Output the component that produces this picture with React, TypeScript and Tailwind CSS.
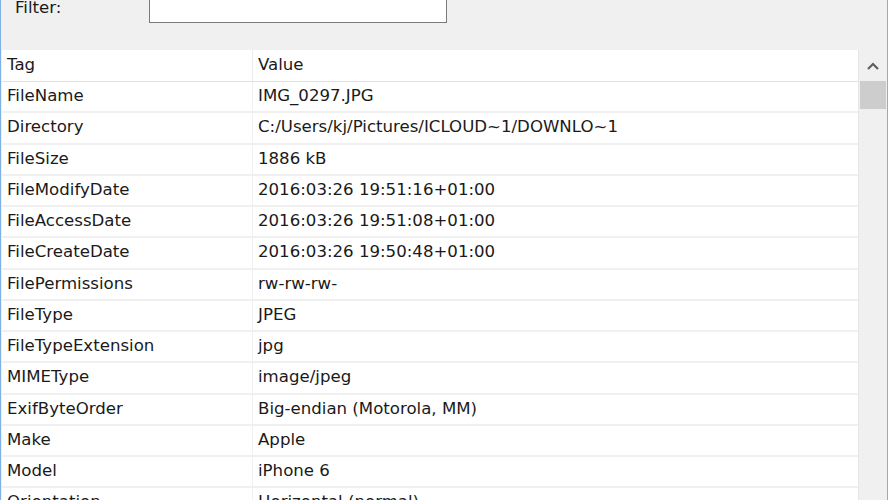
const rows: [string, string][] = [
  ['FileName', 'IMG_0297.JPG'],
  ['Directory', 'C:/Users/kj/Pictures/ICLOUD~1/DOWNLO~1'],
  ['FileSize', '1886 kB'],
  ['FileModifyDate', '2016:03:26 19:51:16+01:00'],
  ['FileAccessDate', '2016:03:26 19:51:08+01:00'],
  ['FileCreateDate', '2016:03:26 19:50:48+01:00'],
  ['FilePermissions', 'rw-rw-rw-'],
  ['FileType', 'JPEG'],
  ['FileTypeExtension', 'jpg'],
  ['MIMEType', 'image/jpeg'],
  ['ExifByteOrder', 'Big-endian (Motorola, MM)'],
  ['Make', 'Apple'],
  ['Model', 'iPhone 6'],
  ['Orientation', 'Horizontal (normal)'],
]

export default function App() {
  return (
    <div
      className="w-[888px] h-[500px] overflow-hidden bg-[#f0f0f0] border-l border-r border-[#7fb1e3] text-[16.6px] text-[#1a1a1a]"
      style={{ fontFamily: '"DejaVu Sans", sans-serif' }}
    >
      {/* filter bar */}
      <div className="flex items-start h-[56px] -mt-[6px]">
        <span className="ml-[14px] w-[134px] shrink-0 mt-[2px] leading-[24px]">Filter:</span>
        <div className="w-[298px] h-[29px] bg-white border border-[#7a7a7a]" />
      </div>

      <div className="flex h-[450px]">
        {/* table */}
        <div className="ml-[1px] w-[856px] bg-white">
          <div className="flex h-[32px] border-b border-[#e2e2e2]">
            <div className="w-[251px] pl-[5px] flex items-center border-r border-[#ececec]">Tag</div>
            <div className="pl-[5px] flex items-center">Value</div>
          </div>
          {rows.map(([tag, value]) => (
            <div key={tag} className="flex h-[31.25px] border-b-2 border-[#f0f0f0]">
              <div className="w-[251px] pl-[5px] flex items-center border-r border-[#f0f0f0]">{tag}</div>
              <div className="pl-[5px] flex items-center">{value}</div>
            </div>
          ))}
        </div>

        {/* scrollbar */}
        <div className="w-[29px] flex flex-col items-stretch border-l border-[#e6e6e6]">
          <div className="h-[31px] flex items-center justify-center">
            <svg width="12" height="8" viewBox="0 0 12 8">
              <path d="M1 7 L6 2 L11 7" fill="none" stroke="#606060" strokeWidth="2.2" />
            </svg>
          </div>
          <div className="mx-[1px] h-[28px] bg-[#cdcdcd]" />
        </div>
      </div>
    </div>
  )
}
